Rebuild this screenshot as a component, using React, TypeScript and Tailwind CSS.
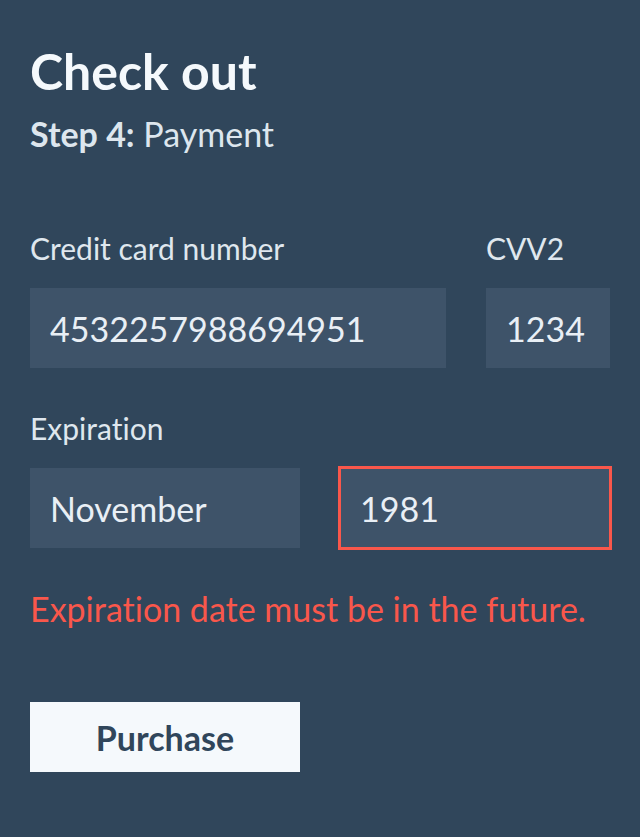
import React from "react";

const Field = ({ value, className = "" }: { value: string; className?: string }) => (
  <div className={`h-[80px] bg-[#3e5369] flex items-center px-[20px] text-[34px] text-[#e9eff5] ${className}`}>
    {value}
  </div>
);

export default function App() {
  return (
    <div className="min-h-[837px] bg-[#30465b] px-[30px] pt-[46px] font-['Lato',sans-serif] text-[#eef3f8] [font-variant-ligatures:none]">
      <h1 className="text-[50px] leading-[50px] font-bold text-[#f5f9fc]">Check out</h1>
      <p className="mt-[21px] text-[34px] leading-[34px] text-[#dde6ee]">
        <span className="font-bold">Step 4:</span> Payment
      </p>

      <div className="mt-[82px] flex gap-[40px]">
        <div className="flex-1 flex flex-col">
          <label className="text-[30px] leading-[30px] text-[#dfe7ee]">Credit card number</label>
          <Field value="4532257988694951" className="mt-[25px]" />
        </div>
        <div className="w-[124px] flex flex-col">
          <label className="text-[30px] leading-[30px] text-[#dfe7ee]">CVV2</label>
          <Field value="1234" className="mt-[25px]" />
        </div>
      </div>

      <label className="mt-[45px] block text-[30px] leading-[30px] text-[#dfe7ee]">Expiration</label>
      <div className="mt-[25px] grid grid-cols-2 gap-[40px]">
        <Field value="November" />
        <Field value="1981" className="outline-3 outline-[#f9574b] -outline-offset-1" />
      </div>

      <p className="mt-[44px] text-[34px] leading-[34px] text-[#f9574b]">
        Expiration date must be in the future.
      </p>

      <button className="mt-[76px] w-[270px] h-[70px] bg-[#f5f9fc] text-[#30465b] text-[34px] font-bold">
        Purchase
      </button>
    </div>
  );
}
